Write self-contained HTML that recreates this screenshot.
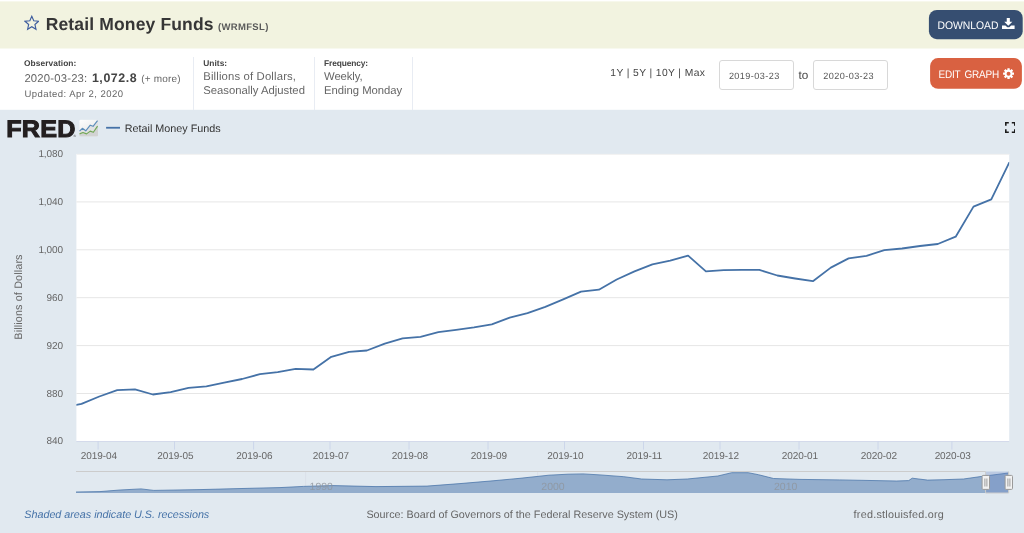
<!DOCTYPE html>
<html lang="en">
<head>
<meta charset="utf-8">
<title>Retail Money Funds (WRMFSL) | FRED</title>
<style>
html,body{margin:0;padding:0;}
body{width:1024px;height:533px;position:relative;overflow:hidden;background:#fff;font-family:"Liberation Sans",sans-serif;color:#666;}
.abs{position:absolute;white-space:pre;line-height:1;text-rendering:geometricPrecision;}
.div{position:absolute;top:57px;width:1px;height:53px;background:#e8ecf3;}
.inp{position:absolute;top:60px;height:28px;width:73px;border:1px solid #d8d8d8;border-radius:3px;background:#fff;}
#htx text{font-family:"Liberation Sans",sans-serif;text-rendering:geometricPrecision;white-space:pre;}
svg text.ax{font-family:"Liberation Sans",sans-serif;font-size:10px;letter-spacing:-.08px;fill:#666;text-rendering:geometricPrecision;}
svg text.ft{font-family:"Liberation Sans",sans-serif;font-size:10.8px;fill:#666;text-rendering:geometricPrecision;}
</style>
</head>
<body>
<svg class="abs" style="left:0;top:0" width="1024" height="533"><rect x="0" y="1.4" width="1024" height="47.1" fill="#f2f3e0"/><rect x="0" y="109.8" width="1024" height="424" fill="#e1e9f0"/><rect x="928.9" y="9.9" width="93.8" height="29.3" rx="8" fill="#364e71"/><rect x="930.1" y="58.1" width="91.8" height="30.7" rx="8" fill="#d96141"/></svg>

<!-- title -->
<svg class="abs" style="left:23.8px;top:15.3px" width="15.6" height="15.6" viewBox="0 0 16 16"><path d="M8 1.3 L10 5.9 L15 6.4 L11.2 9.7 L12.3 14.6 L8 12 L3.7 14.6 L4.8 9.7 L1 6.4 L6 5.9 Z" fill="none" stroke="#3d5c9e" stroke-width="1.15" stroke-linejoin="miter"/></svg>

<!-- download button -->
<svg class="abs" style="left:1002.4px;top:17.8px" width="12.6" height="11" viewBox="0 0 13 12" preserveAspectRatio="none"><path d="M4.9 0h3.2v4.1h2.6L6.5 8.4 2.3 4.1h2.6z" fill="#fff"/><path d="M0 8.2h3.5l2 2h2l2-2H13V12H0z" fill="#fff"/></svg>

<!-- observation -->
<div class="div" style="left:193px"></div>
<div class="div" style="left:314px"></div>
<div class="div" style="left:412px"></div>

<!-- range -->
<div class="inp" style="left:719px"></div>
<div class="inp" style="left:813px"></div>

<!-- edit graph button -->
<svg class="abs" style="left:1002.85px;top:67.65px" width="11.1" height="11.3" viewBox="-6 -6 12 12"><g fill="#fff"><circle r="4.1"/>
<g id="t"><rect x="-1.3" y="-5.9" width="2.6" height="11.8" rx=".4"/></g><use href="#t" transform="rotate(45)"/><use href="#t" transform="rotate(90)"/><use href="#t" transform="rotate(135)"/></g><circle r="2.15" fill="#d96141"/></svg>

<!-- FRED logo -->
<svg class="abs" style="left:0;top:112px;opacity:.999;will-change:opacity" width="104" height="30" viewBox="0 0 104 30">
<text x="6.3" y="25.15" transform="translate(6.3 0) scale(1.05 1) translate(-6.3 0)" style="font-family:'Liberation Sans',sans-serif;font-weight:bold;font-size:24px;letter-spacing:.15px" fill="#231f20" stroke="#231f20" stroke-width="1" stroke-linejoin="miter">FRED</text>
<text x="73.6" y="25.4" style="font-family:'Liberation Sans',sans-serif;font-size:3.6px" fill="#555">®</text>
<g transform="translate(79.25 7.6)">
<defs><linearGradient id="ig" x1="0" y1="0" x2=".6" y2="1"><stop offset="0" stop-color="#ffffff"/><stop offset="1" stop-color="#e6e6e6"/></linearGradient>
<clipPath id="ic"><rect x="0" y="0" width="18.85" height="16.9" rx="1.6"/></clipPath></defs>
<g clip-path="url(#ic)">
<rect x="0" y="0" width="18.85" height="16.9" fill="url(#ig)"/>
<path d="M0 11.8L.3 11.5 3.1 8.7 6.5 11.2 11 5.6 13.8 6.7 18.3 1.1 18.85 .5V16.9H0Z" fill="#e2e2e2"/>
<path d="M0 14.4L.3 14.3 3.7 12.9 7.3 14.3 11 11.5 14.1 12.7 18.3 6.5 18.85 5.7V16.9H0Z" fill="#d2d3d3"/>
</g>
<path d="M.3 11.5L3.1 8.7 6.5 11.2 11 5.6 13.8 6.7 18.3 1.1" fill="none" stroke="#5b8cba" stroke-width="1.15" stroke-linejoin="round"/>
<path d="M.3 14.3L3.7 12.9 7.3 14.3 11 11.5 14.1 12.7 18.3 6.5" fill="none" stroke="#72a857" stroke-width="1.15" stroke-linejoin="round"/>
</g>
</svg>
<svg class="abs" style="left:100px;top:120px" width="30" height="14"><line x1="6.1" x2="20" y1="7.75" y2="7.75" stroke="#4572a7" stroke-width="1.8"/></svg>

<!-- fullscreen icon -->
<svg class="abs" style="left:1004.5px;top:121.8px" width="10.6" height="11" viewBox="0 0 10.6 11"><path d="M.8 3.8V.8H3.8M6.8 .8h3v3M9.8 7.2v3H6.8M3.8 10.2H.8V7.2" fill="none" stroke="#1c1c1c" stroke-width="1.6"/></svg>

<!-- header text -->
<svg class="abs" id="htx" style="left:0;top:0" width="1024" height="150" viewBox="0 0 1024 150">
<text x="45.7" y="29.65" style="font-size:17.5px;letter-spacing:0.15px;font-weight:bold;" fill="#363636">Retail Money Funds</text>
<text x="218.0" y="29.6" style="font-size:9.5px;letter-spacing:0.33px;font-weight:bold;" fill="#5a5a5a">(WRMFSL)</text>
<text x="937.4" y="29.25" transform="translate(937.4 0) scale(.935 1) translate(-937.4 0)" style="font-size:11.1px;letter-spacing:0px;" fill="#fff">DOWNLOAD</text>
<text x="24.0" y="65.7" style="font-size:8.4px;letter-spacing:0.06px;font-weight:bold;" fill="#444">Observation:</text>
<text x="24.4" y="81.5" style="font-size:11.3px;letter-spacing:0.19px;" fill="#666">2020-03-23:</text>
<text x="91.9" y="81.5" style="font-size:12.4px;letter-spacing:0.58px;font-weight:bold;" fill="#444">1,072.8</text>
<text x="141.2" y="81.5" style="font-size:10.0px;letter-spacing:0.2px;" fill="#666">(+ more)</text>
<text x="24.4" y="96.8" style="font-size:9.5px;letter-spacing:0.46px;" fill="#666">Updated: Apr 2, 2020</text>
<text x="203.2" y="65.7" style="font-size:8.4px;letter-spacing:0.04px;font-weight:bold;" fill="#444">Units:</text>
<text x="203.2" y="79.8" style="font-size:11.3px;letter-spacing:0.16px;" fill="#666">Billions of Dollars,</text>
<text x="203.2" y="94.2" style="font-size:11.3px;letter-spacing:0.0px;" fill="#666">Seasonally Adjusted</text>
<text x="324.1" y="65.7" style="font-size:8.4px;letter-spacing:-0.14px;font-weight:bold;" fill="#444">Frequency:</text>
<text x="324.1" y="79.8" style="font-size:11.3px;letter-spacing:-0.11px;" fill="#666">Weekly,</text>
<text x="324.1" y="94.2" style="font-size:11.3px;letter-spacing:-0.03px;" fill="#666">Ending Monday</text>
<text x="610.3" y="75.5" style="font-size:10.3px;letter-spacing:0.39px;" fill="#444">1Y | 5Y | 10Y | Max</text>
<text x="728.9" y="78.8" style="font-size:9.1px;letter-spacing:0.42px;" fill="#555">2019-03-23</text>
<text x="798.6" y="78.9" style="font-size:11.7px;letter-spacing:-0.1px;" fill="#444">to</text>
<text x="823.3" y="78.8" style="font-size:9.1px;letter-spacing:0.42px;" fill="#555">2020-03-23</text>
<text x="938.5" y="78.15" transform="translate(938.5 0) scale(.908 1) translate(-938.5 0)" style="font-size:11px;letter-spacing:-0.2px;word-spacing:1.6px;" fill="#fff">EDIT GRAPH</text>
<text x="124.7" y="131.9" style="font-size:10.8px;letter-spacing:0.0px;" fill="#333">Retail Money Funds</text>
</svg>
<!-- chart -->
<svg class="abs" style="left:0;top:0" width="1024" height="533" viewBox="0 0 1024 533">
<rect x="76.4" y="154" width="932.8000000000001" height="287.0" fill="#fff"/>
<line x1="76.4" x2="1009.2" y1="393.5" y2="393.5" stroke="#e6e6e6" stroke-width="1"/>
<line x1="76.4" x2="1009.2" y1="345.6" y2="345.6" stroke="#e6e6e6" stroke-width="1"/>
<line x1="76.4" x2="1009.2" y1="297.7" y2="297.7" stroke="#e6e6e6" stroke-width="1"/>
<line x1="76.4" x2="1009.2" y1="249.8" y2="249.8" stroke="#e6e6e6" stroke-width="1"/>
<line x1="76.4" x2="1009.2" y1="201.9" y2="201.9" stroke="#e6e6e6" stroke-width="1"/>

<line x1="76.4" x2="1009.2" y1="154.4" y2="154.4" stroke="#f1f1f1" stroke-width="1"/>
<line x1="76.4" x2="1009.2" y1="441.55" y2="441.55" stroke="#d3daea" stroke-width="1"/>
<line x1="98.1" x2="98.1" y1="441" y2="449.6" stroke="#ccd6ea" stroke-width="1"/>
<text x="98.9" y="459" text-anchor="middle" class="ax">2019-04</text>
<line x1="174.5" x2="174.5" y1="441" y2="449.6" stroke="#ccd6ea" stroke-width="1"/>
<text x="175.3" y="459" text-anchor="middle" class="ax">2019-05</text>
<line x1="253.6" x2="253.6" y1="441" y2="449.6" stroke="#ccd6ea" stroke-width="1"/>
<text x="254.4" y="459" text-anchor="middle" class="ax">2019-06</text>
<line x1="330.0" x2="330.0" y1="441" y2="449.6" stroke="#ccd6ea" stroke-width="1"/>
<text x="330.8" y="459" text-anchor="middle" class="ax">2019-07</text>
<line x1="409.0" x2="409.0" y1="441" y2="449.6" stroke="#ccd6ea" stroke-width="1"/>
<text x="409.8" y="459" text-anchor="middle" class="ax">2019-08</text>
<line x1="488.0" x2="488.0" y1="441" y2="449.6" stroke="#ccd6ea" stroke-width="1"/>
<text x="488.8" y="459" text-anchor="middle" class="ax">2019-09</text>
<line x1="564.5" x2="564.5" y1="441" y2="449.6" stroke="#ccd6ea" stroke-width="1"/>
<text x="565.3" y="459" text-anchor="middle" class="ax">2019-10</text>
<line x1="643.5" x2="643.5" y1="441" y2="449.6" stroke="#ccd6ea" stroke-width="1"/>
<text x="644.3" y="459" text-anchor="middle" class="ax">2019-11</text>
<line x1="720.0" x2="720.0" y1="441" y2="449.6" stroke="#ccd6ea" stroke-width="1"/>
<text x="720.8" y="459" text-anchor="middle" class="ax">2019-12</text>
<line x1="799.0" x2="799.0" y1="441" y2="449.6" stroke="#ccd6ea" stroke-width="1"/>
<text x="799.8" y="459" text-anchor="middle" class="ax">2020-01</text>
<line x1="878.0" x2="878.0" y1="441" y2="449.6" stroke="#ccd6ea" stroke-width="1"/>
<text x="878.8" y="459" text-anchor="middle" class="ax">2020-02</text>
<line x1="951.9" x2="951.9" y1="441" y2="449.6" stroke="#ccd6ea" stroke-width="1"/>
<text x="952.7" y="459" text-anchor="middle" class="ax">2020-03</text>

<text x="63" y="443.6" text-anchor="end" class="ax">840</text>
<text x="63" y="396.9" text-anchor="end" class="ax">880</text>
<text x="63" y="349.0" text-anchor="end" class="ax">920</text>
<text x="63" y="301.1" text-anchor="end" class="ax">960</text>
<text x="63" y="253.2" text-anchor="end" class="ax">1,000</text>
<text x="63" y="205.3" text-anchor="end" class="ax">1,040</text>
<text x="63" y="156.8" text-anchor="end" class="ax">1,080</text>

<text transform="translate(21.5 297) rotate(-90)" text-anchor="middle" class="ft" style="letter-spacing:.13px">Billions of Dollars</text>
<clipPath id="cp"><rect x="76.4" y="154" width="932.8000000000001" height="287.0"/></clipPath>
<path d="M76.4 404.9 L81.5 403.9 L99.3 396.5 L117.2 390.2 L135.0 389.4 L152.9 394.5 L170.7 392.2 L188.5 387.9 L206.4 386.4 L224.2 382.6 L242.1 379.0 L259.9 374.2 L277.7 372.2 L295.6 368.9 L313.4 369.5 L331.3 356.8 L349.1 351.8 L366.9 350.5 L384.8 343.6 L402.6 338.3 L420.5 336.8 L438.3 332.2 L456.1 329.9 L474.0 327.4 L491.8 324.3 L509.7 317.7 L527.5 313.2 L545.3 306.8 L563.2 299.4 L581.0 291.7 L598.9 289.7 L616.7 279.5 L634.5 271.4 L652.4 264.3 L670.2 260.7 L688.1 255.6 L705.9 271.4 L723.7 270.1 L741.6 269.9 L759.4 269.9 L777.3 275.5 L795.1 278.5 L812.9 281.2 L830.8 267.6 L848.6 258.4 L866.5 255.8 L884.3 250.2 L902.1 248.5 L920.0 246.0 L937.8 244.0 L955.7 236.7 L973.5 206.6 L991.3 199.3 L1009.2 162.7" fill="none" stroke="#4572a7" stroke-width="1.8" stroke-linejoin="round" stroke-linecap="round" clip-path="url(#cp)"/>

<!-- navigator -->
<line x1="305.6" x2="305.6" y1="471.5" y2="493" stroke="#dbe1e9" stroke-width="1"/>
<line x1="537.6" x2="537.6" y1="471.5" y2="493" stroke="#dbe1e9" stroke-width="1"/>
<line x1="770" x2="770" y1="471.5" y2="493" stroke="#dbe1e9" stroke-width="1"/>
<path d="M76.0 492.0 L100.0 491.6 L120.0 490.0 L141.0 488.9 L153.8 490.4 L200.0 489.6 L250.0 488.3 L280.0 487.6 L303.6 486.4 L333.0 485.6 L376.0 486.6 L427.0 486.1 L460.0 483.6 L493.0 480.8 L520.0 478.3 L548.9 475.2 L568.0 474.2 L583.0 473.9 L600.0 474.9 L623.8 476.7 L641.6 479.0 L667.0 479.8 L687.3 479.0 L717.8 476.0 L731.7 472.7 L748.2 472.7 L758.4 474.7 L773.6 478.5 L800.0 479.4 L839.6 479.9 L896.7 481.0 L908.7 480.6 L912.2 478.2 L927.7 480.1 L944.0 479.7 L963.5 479.0 L982.5 476.3 L1008.5 473.0 L1008.5 493 L76 493 Z" fill="#93adcc"/>
<path d="M76.0 492.0 L100.0 491.6 L120.0 490.0 L141.0 488.9 L153.8 490.4 L200.0 489.6 L250.0 488.3 L280.0 487.6 L303.6 486.4 L333.0 485.6 L376.0 486.6 L427.0 486.1 L460.0 483.6 L493.0 480.8 L520.0 478.3 L548.9 475.2 L568.0 474.2 L583.0 473.9 L600.0 474.9 L623.8 476.7 L641.6 479.0 L667.0 479.8 L687.3 479.0 L717.8 476.0 L731.7 472.7 L748.2 472.7 L758.4 474.7 L773.6 478.5 L800.0 479.4 L839.6 479.9 L896.7 481.0 L908.7 480.6 L912.2 478.2 L927.7 480.1 L944.0 479.7 L963.5 479.0 L982.5 476.3 L1008.5 473.0" fill="none" stroke="#4572a7" stroke-opacity=".75" stroke-width="1"/>
<text x="309.6" y="489.8" class="ft" style="font-size:10.5px;fill:#8f959c;fill-opacity:.8">1990</text>
<text x="541.3" y="489.8" class="ft" style="font-size:10.5px;fill:#8f959c;fill-opacity:.8">2000</text>
<text x="774" y="489.8" class="ft" style="font-size:10.5px;fill:#8f959c;fill-opacity:.8">2010</text>
<rect x="985.6" y="471.5" width="23" height="21.5" fill="#6685c2" fill-opacity=".3"/>
<path d="M76 471.5 H985.6 V493 H1008.6 V471.5" fill="none" stroke="#ccc" stroke-width="1"/>
<g>
<rect x="982.1" y="475.4" width="7.4" height="14" rx="1" fill="#f2f2f2" stroke="#999" stroke-width="1"/>
<path d="M984.9 478.5v8M986.9 478.5v8" stroke="#888" stroke-width=".8"/>
<rect x="1005.1" y="475.4" width="7.4" height="14" rx="1" fill="#f2f2f2" stroke="#999" stroke-width="1"/>
<path d="M1007.9 478.5v8M1009.9 478.5v8" stroke="#888" stroke-width=".8"/>
</g>

<!-- footer -->
<text x="24.3" y="518.3" class="ft" style="font-style:italic;fill:#4572a7;letter-spacing:-.03px">Shaded areas indicate U.S. recessions</text>
<text x="366.4" y="518.3" class="ft">Source: Board of Governors of the Federal Reserve System (US)</text>
<text x="853.6" y="518.3" class="ft" style="letter-spacing:.24px">fred.stlouisfed.org</text>
</svg>
</body>
</html>
